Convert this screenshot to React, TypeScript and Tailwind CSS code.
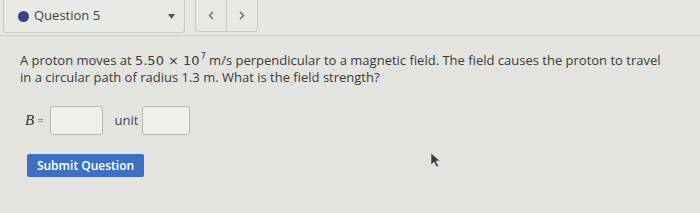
import React from "react";

function Cursor() {
  return (
    <svg width="12" height="16" viewBox="0 0 12 16" className="absolute left-[430px] top-[152px]">
      <path d="M1 1 L1 13 L4 10 L6.5 15 L8.5 14 L6 9 L10 9 Z" fill="#3c3c3c" stroke="#e4e4e0" strokeWidth="0.6" />
    </svg>
  );
}

export default function App() {
  return (
    <div
      className="relative w-[700px] h-[213px] overflow-hidden bg-[#e3e3df] text-[#3b3b3b]"
      style={{ fontFamily: '"Open Sans", "Liberation Sans", sans-serif' }}
    >
      {/* header */}
      <div className="flex items-start gap-[10px] h-[36px] pl-[3px] border-b border-[#cfcfcb] bg-[#e6e6e2]">
        <div className="flex items-center w-[182px] h-[33px] rounded-b-[4px] border border-t-0 border-[#c9c9c5] bg-[#e8e8e4] pl-[14px] pr-[9px]">
          <span className="w-[11px] h-[11px] rounded-full bg-[#3b3f8e]" />
          <span className="ml-[5px] text-[13px] text-[#444]">Question 5</span>
          <span className="ml-auto">
            <svg width="7" height="5" viewBox="0 0 7 5">
              <path d="M0 0 H7 L3.5 5 Z" fill="#555" />
            </svg>
          </span>
        </div>
        <div className="flex h-[32px] rounded-b-[4px] border border-t-0 border-[#c9c9c5] bg-[#e8e8e4]">
          <div className="w-[31px] flex items-center justify-center border-r border-[#c9c9c5]">
            <svg width="6" height="9" viewBox="0 0 6 9">
              <path d="M5 1 L1.5 4.5 L5 8" fill="none" stroke="#666" strokeWidth="1.4" />
            </svg>
          </div>
          <div className="w-[30px] flex items-center justify-center">
            <svg width="6" height="9" viewBox="0 0 6 9">
              <path d="M1 1 L4.5 4.5 L1 8" fill="none" stroke="#666" strokeWidth="1.4" />
            </svg>
          </div>
        </div>
      </div>

      {/* body */}
      <div className="pl-[20px] pt-[16px]">
        <p className="text-[13px] leading-[17px] text-[#3a3a3a]">
          A proton moves at{" "}
          <span style={{ fontFamily: '"DejaVu Sans", sans-serif' }}>
            5.50 × 10<span className="inline-block text-[8px] leading-none relative -top-[6px] ml-[1px]">7</span>
          </span>{" "}
          m/s perpendicular to a magnetic field. The field causes the proton to travel
          <br />
          in a circular path of radius 1.3 m. What is the field strength?
        </p>

        <div className="flex items-center mt-[20px] ml-[5px]">
          <span
            className="italic text-[15px] text-[#333]"
            style={{ fontFamily: '"Liberation Serif", serif' }}
          >
            B
          </span>
          <span className="ml-[3px] text-[11px] text-[#555]">=</span>
          <div className="ml-[7px] w-[53px] h-[29px] rounded-[3px] border border-[#b8b8b4] bg-[#efefec]" />
          <span className="ml-[11px] text-[13px] text-[#444]">unit</span>
          <div className="ml-[4px] w-[48px] h-[29px] rounded-[3px] border border-[#b8b8b4] bg-[#efefec]" />
        </div>

        <button className="mt-[19px] ml-[7px] h-[23px] w-[117px] rounded-[2px] bg-[#3e70c2] text-white text-[12px] font-semibold leading-[23px]">
          Submit Question
        </button>
      </div>

      <Cursor />
    </div>
  );
}
